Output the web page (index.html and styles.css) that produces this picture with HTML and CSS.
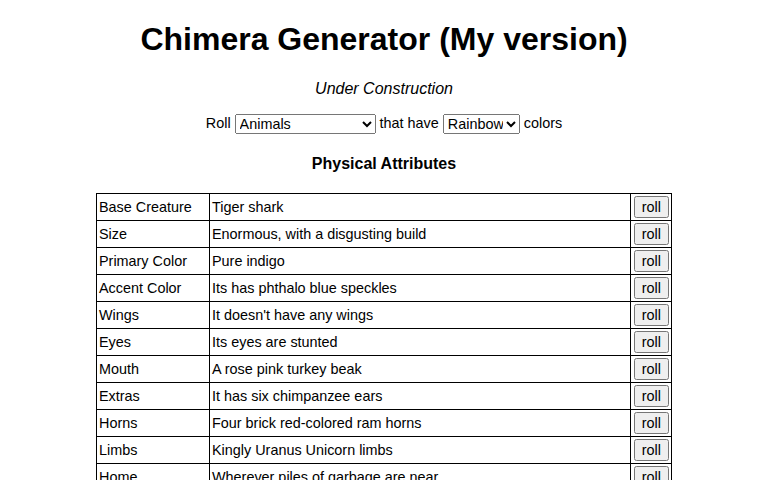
FILE: index.html
```html
<!DOCTYPE html>
<html>
<head>
<meta charset="utf-8">
<link rel="stylesheet" href="styles.css">
</head>
<body>
<h1 class="title">Chimera Generator (My version)</h1>
<p class="sub">Under Construction</p>
<p class="controls">Roll <select class="sel-kind"><option>Animals</option></select> that have <select class="sel-color"><option>Rainbow</option></select> colors</p>
<h4 class="section">Physical Attributes</h4>
<table class="attrs">
<tr><td class="k">Base Creature</td><td class="v">Tiger shark</td><td class="b"><button>roll</button></td></tr>
<tr><td class="k">Size</td><td class="v">Enormous, with a disgusting build</td><td class="b"><button>roll</button></td></tr>
<tr><td class="k">Primary Color</td><td class="v">Pure indigo</td><td class="b"><button>roll</button></td></tr>
<tr><td class="k">Accent Color</td><td class="v">Its has phthalo blue speckles</td><td class="b"><button>roll</button></td></tr>
<tr><td class="k">Wings</td><td class="v">It doesn't have any wings</td><td class="b"><button>roll</button></td></tr>
<tr><td class="k">Eyes</td><td class="v">Its eyes are stunted</td><td class="b"><button>roll</button></td></tr>
<tr><td class="k">Mouth</td><td class="v">A rose pink turkey beak</td><td class="b"><button>roll</button></td></tr>
<tr><td class="k">Extras</td><td class="v">It has six chimpanzee ears</td><td class="b"><button>roll</button></td></tr>
<tr><td class="k">Horns</td><td class="v">Four brick red-colored ram horns</td><td class="b"><button>roll</button></td></tr>
<tr><td class="k">Limbs</td><td class="v">Kingly Uranus Unicorn limbs</td><td class="b"><button>roll</button></td></tr>
<tr><td class="k">Home</td><td class="v">Wherever piles of garbage are near</td><td class="b"><button>roll</button></td></tr>
</table>
</body>
</html>
```
FILE: styles.css
```css
body {
  margin: 8px;
  font-family: "Liberation Sans", Arial, sans-serif;
  font-size: 16px;
  color: #000;
  background: #fff;
  text-align: center;
}
.title { font-size: 32px; margin: 13px 0 22px; }
.sub { font-style: italic; margin: 16px 0; }
.controls { margin: 15px 0 16px; line-height: 18px; font-size: 14.4px; }
.controls select {
  font-family: "Liberation Sans", Arial, sans-serif;
  font-size: 14.4px;
  height: 20px;
  padding: 0;
  vertical-align: middle;
}
.sel-kind { width: 141px; }
.sel-color { width: 77px; }
.section { font-size: 16px; margin: 21px 0 20px; }
.attrs {
  width: 576px;
  margin: 0 auto;
  border-collapse: collapse;
  text-align: left;
  font-size: 14.4px;
}
.attrs td { border: 1px solid #000; padding: 2px; height: 22px; }
.k { width: 108px; }
.b { width: 36px; text-align: right; }
.b button {
  font-family: "Liberation Sans", Arial, sans-serif;
  font-size: 14.4px;
  height: 22px;
  padding: 0 6px;
  vertical-align: middle;
}
```
